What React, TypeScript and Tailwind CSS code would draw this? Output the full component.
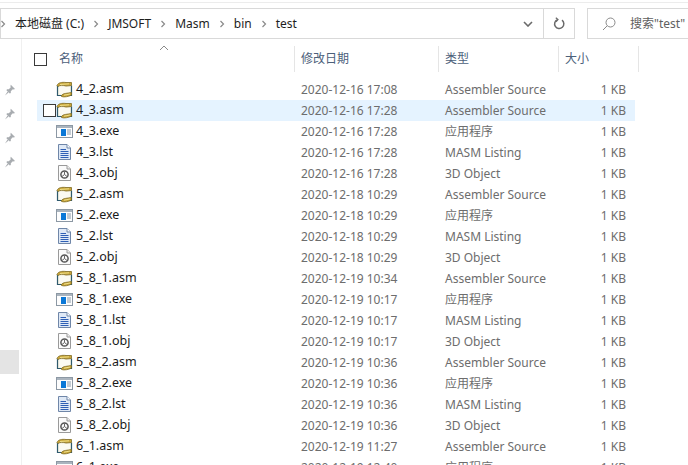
const font = { fontFamily: '"Noto Sans", "Noto Sans CJK SC", sans-serif' };

type Kind = 'asm' | 'exe' | 'lst' | 'obj';
type Row = [string, string, Kind];

const rows: Row[] = [
  ['4_2.asm', '2020-12-16 17:08', 'asm'],
  ['4_3.asm', '2020-12-16 17:28', 'asm'],
  ['4_3.exe', '2020-12-16 17:28', 'exe'],
  ['4_3.lst', '2020-12-16 17:28', 'lst'],
  ['4_3.obj', '2020-12-16 17:28', 'obj'],
  ['5_2.asm', '2020-12-18 10:29', 'asm'],
  ['5_2.exe', '2020-12-18 10:29', 'exe'],
  ['5_2.lst', '2020-12-18 10:29', 'lst'],
  ['5_2.obj', '2020-12-18 10:29', 'obj'],
  ['5_8_1.asm', '2020-12-19 10:34', 'asm'],
  ['5_8_1.exe', '2020-12-19 10:17', 'exe'],
  ['5_8_1.lst', '2020-12-19 10:17', 'lst'],
  ['5_8_1.obj', '2020-12-19 10:17', 'obj'],
  ['5_8_2.asm', '2020-12-19 10:36', 'asm'],
  ['5_8_2.exe', '2020-12-19 10:36', 'exe'],
  ['5_8_2.lst', '2020-12-19 10:36', 'lst'],
  ['5_8_2.obj', '2020-12-19 10:36', 'obj'],
  ['6_1.asm', '2020-12-19 11:27', 'asm'],
  ['6_1.exe', '2020-12-19 12:40', 'exe'],
];

const typeName: Record<Kind, string> = {
  asm: 'Assembler Source',
  exe: '应用程序',
  lst: 'MASM Listing',
  obj: '3D Object',
};

function FileIcon({ kind }: { kind: Kind }) {
  if (kind === 'asm')
    return (
      <svg width="17" height="17" viewBox="0 0 17 17" fill="none">
        <path d="M1.5 4.5V14.5H15.5V4.5" fill="#f4f2e4" stroke="#2f5a6e" strokeWidth="1.2" />
        <rect x="3" y="6" width="11" height="7" fill="#fbfaf2" />
        <path d="M1 4.5C2 1.5 6 1 10 1.5L15.5 1.5V4.5L10 5C7 4 4 4 2 5.5Z" fill="#c9a63a" stroke="#7d6a22" strokeWidth="0.8" />
        <path d="M4 3.5L13 2.8" stroke="#efe08a" strokeWidth="1" />
        <path d="M5.5 14.5C7 12 11 12.5 15.5 11.5V14C13 15.5 8 16.5 5.5 15.5Z" fill="#c9a63a" stroke="#7d6a22" strokeWidth="0.8" />
        <path d="M8 14.2L14 13" stroke="#efe08a" strokeWidth="1" />
      </svg>
    );
  if (kind === 'exe')
    return (
      <svg width="17" height="17" viewBox="0 0 17 17" fill="none">
        <rect x="0.5" y="2.5" width="16" height="12" fill="#fdfdfd" stroke="#8c98a4" />
        <rect x="1" y="3" width="15" height="2" fill="#aab4be" />
        <rect x="5" y="6" width="5" height="7" fill="#0b78d7" />
        <path d="M11 7H15M11 9H15M11 11H15" stroke="#8a99a8" />
      </svg>
    );
  if (kind === 'lst')
    return (
      <svg width="17" height="17" viewBox="0 0 17 17" fill="none">
        <path d="M2.5 0.5H11L14.5 4V15.5H2.5Z" fill="#dfe9f6" stroke="#6f86a8" />
        <path d="M11 0.5V4H14.5" fill="#fff" stroke="#6f86a8" />
        <path d="M4.5 5.5H10M4.5 7.5H12.5M4.5 9.5H12.5M4.5 11.5H12.5M4.5 13.5H12.5" stroke="#2e5fb5" />
      </svg>
    );
  return (
    <svg width="17" height="17" viewBox="0 0 17 17" fill="none">
      <path d="M2.5 0.5H11L14.5 4V15.5H2.5Z" fill="#fbfbfb" stroke="#9a9a9a" />
      <path d="M11 0.5V4H14.5" fill="#eee" stroke="#9a9a9a" />
      <circle cx="8.5" cy="9.5" r="3.6" stroke="#555" strokeWidth="1.5" />
      <path d="M8.5 6.5V9.5L6 11.5M8.5 9.5L11 11.5" stroke="#666" />
    </svg>
  );
}

function Pin() {
  return (
    <svg width="12" height="12" viewBox="0 0 12 12" fill="#a8acb0">
      <path d="M6.8 0.8L11 5L9.8 5.6L8.8 5.2L6.8 7.2L6.8 9L5.8 9.6L2.4 6.2L3 5.2L4.8 5.2L6.8 3.2L6.4 2.2Z" />
      <path d="M3.6 7.4L4.6 8.4L1 11.4Z" />
    </svg>
  );
}

function Chevron() {
  return (
    <svg width="6" height="8" viewBox="0 0 6 8" fill="none" stroke="#8a8a8a" strokeWidth="1.2">
      <path d="M1.5 1L4.5 4L1.5 7" />
    </svg>
  );
}

function Crumb({ text }: { text: string }) {
  return (
    <>
      <span className="text-[12px] leading-none text-[#1e1e1e] whitespace-nowrap">{text}</span>
    </>
  );
}

function HeadCell({ w, text, pad = 'pl-[6px]' }: { w: string; text: string; pad?: string }) {
  return (
    <div className={`${w} ${pad} h-[26px] shrink-0 border-r border-[#e5e5e5] flex items-center text-[12px] text-[#4c607a] whitespace-nowrap`}>
      {text}
    </div>
  );
}

export default function App() {
  return (
    <div className="w-[688px] h-[465px] bg-white overflow-hidden flex flex-col" style={font}>
      <div className="mt-[2px] h-[1px] shrink-0 bg-[#ececec]" />
      <div className="mt-[5px] h-[31px] shrink-0 flex">
        <div className="w-[575px] shrink-0 h-full border border-[#d9d9d9] flex items-center">
          <div className="flex-1 flex items-center pl-[0px] gap-[9px] -ml-[1px]">
            <Chevron />
            <Crumb text="本地磁盘 (C:)" />
            <Chevron />
            <Crumb text="JMSOFT" />
            <Chevron />
            <Crumb text="Masm" />
            <Chevron />
            <Crumb text="bin" />
            <Chevron />
            <Crumb text="test" />
          </div>
          <div className="w-[31px] h-full flex items-center justify-center">
            <svg width="10" height="6" viewBox="0 0 10 6" fill="none" stroke="#6a6a6a" strokeWidth="1.6">
              <path d="M1 1L5 5L9 1" />
            </svg>
          </div>
          <div className="w-[31px] h-full border-l border-[#d9d9d9] flex items-center justify-center">
            <svg width="12" height="13" viewBox="0 0 12 13" fill="none" stroke="#6a6a6a" strokeWidth="1.5">
              <path d="M4.5 2.6A4.6 4.6 0 1 0 9 3.2" />
              <path d="M2.8 0.8L5 2.6L3 4.8" strokeWidth="1.2" />
            </svg>
          </div>
        </div>
        <div className="ml-[12px] flex-1 h-full border border-[#d9d9d9] border-r-0 flex items-center pl-[14px] gap-[14px] text-[12px] text-[#5f5f5f] whitespace-nowrap">
          <svg width="14" height="14" viewBox="0 0 14 14" fill="none" stroke="#8a8a8a" strokeWidth="1">
            <circle cx="8.5" cy="5.5" r="4.5" />
            <path d="M5.2 8.8L1 13" />
          </svg>
          <span>搜索"test"</span>
        </div>
      </div>
      <div className="flex-1 min-h-0 flex">
        <div className="w-[22px] shrink-0 border-r border-[#f0f0f0] flex flex-col">
          <div className="mt-[45px] flex flex-col gap-[12px] pl-[4px]">
            <Pin />
            <Pin />
            <Pin />
            <Pin />
          </div>
          <div className="mt-[182px] w-[19px] h-[24px] bg-[#e4e4e4]" />
        </div>
        <div className="flex-1 min-w-0 flex flex-col">
          <div className="relative mt-[7px] h-[26px] shrink-0 flex">
            <svg className="absolute left-[137px] -top-[1px]" width="10" height="6" viewBox="0 0 10 6" fill="none" stroke="#8a8a8a">
              <path d="M1 5L5 1L9 5" />
            </svg>
            <div className="w-[37px] shrink-0 flex items-center pl-[12px]">
              <div className="w-[13px] h-[13px] border border-[#3a3a3a]" />
            </div>
            <HeadCell w="w-[236px]" text="名称" pad="pl-0" />
            <HeadCell w="w-[144px]" text="修改日期" />
            <HeadCell w="w-[120px]" text="类型" />
            <HeadCell w="w-[80px]" text="大小" />
          </div>
          <div className="mt-[7px] flex flex-col">
            {rows.map(([name, date, kind], i) => (
              <div
                key={name}
                className={`h-[21px] shrink-0 w-[598px] ml-[15px] flex items-center text-[12px] whitespace-nowrap ${i === 1 ? 'bg-[#e5f3ff]' : ''}`}
              >
                <div className="w-[19px] shrink-0 flex justify-end pr-[0px]">
                  {i === 1 && <div className="w-[13px] h-[13px] bg-white border border-[#3a3a3a]" />}
                </div>
                <FileIcon kind={kind} />
                <span className="ml-[3px] w-[225px] shrink-0 text-[#1a1a1a] text-[12.5px]">{name}</span>
                <span className="w-[144px] shrink-0 text-[#6d6d6d]">{date}</span>
                <span className="w-[125px] shrink-0 text-[#6d6d6d]">{typeName[kind]}</span>
                <span className="w-[60px] shrink-0 text-right text-[#6d6d6d] -ml-[4px]">1 KB</span>
              </div>
            ))}
          </div>
        </div>
      </div>
    </div>
  );
}
